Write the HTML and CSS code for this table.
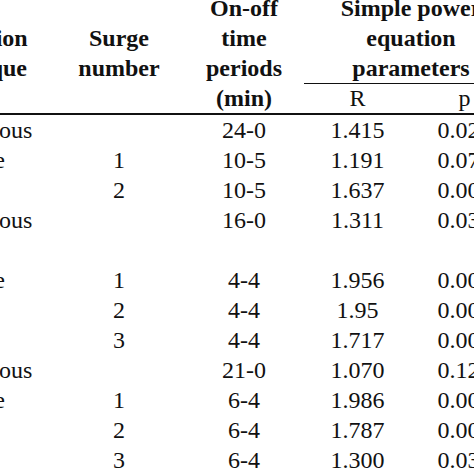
FILE: index.html
```html
<!DOCTYPE html>
<html>
<head>
<meta charset="utf-8">
<link rel="stylesheet" href="styles.css">
</head>
<body>
<div class="page">
<table class="tbl">
<colgroup><col class="c1"><col class="c2"><col class="c3"><col class="c4"><col class="c5"></colgroup>
<thead>
<tr>
<th rowspan="2">Irrigation<br>technique</th>
<th rowspan="2">Surge<br>number</th>
<th rowspan="2">On-off<br>time<br>periods<br>(min)</th>
<th colspan="2" class="grp">Simple power<br>equation<br>parameters</th>
</tr>
<tr><th class="sub">R</th><th class="sub">p</th></tr>
</thead>
<tbody>
<tr><td>Continuous</td><td></td><td>24-0</td><td>1.415</td><td>0.025</td></tr>
<tr><td>Surge</td><td>1</td><td>10-5</td><td>1.191</td><td>0.071</td></tr>
<tr><td></td><td>2</td><td>10-5</td><td>1.637</td><td>0.004</td></tr>
<tr><td>Continuous</td><td></td><td>16-0</td><td>1.311</td><td>0.032</td></tr>
<tr><td></td><td></td><td></td><td></td><td></td></tr>
<tr><td>Surge</td><td>1</td><td>4-4</td><td>1.956</td><td>0.002</td></tr>
<tr><td></td><td>2</td><td>4-4</td><td>1.95</td><td>0.003</td></tr>
<tr><td></td><td>3</td><td>4-4</td><td>1.717</td><td>0.006</td></tr>
<tr><td>Continuous</td><td></td><td>21-0</td><td>1.070</td><td>0.124</td></tr>
<tr><td>Surge</td><td>1</td><td>6-4</td><td>1.986</td><td>0.001</td></tr>
<tr><td></td><td>2</td><td>6-4</td><td>1.787</td><td>0.005</td></tr>
<tr><td></td><td>3</td><td>6-4</td><td>1.300</td><td>0.034</td></tr>
</tbody>
</table>
</div>
</body>
</html>
```
FILE: styles.css
```css
html, body {
  margin: 0;
  padding: 0;
  background: #fff;
  overflow: hidden;
}
.page {
  width: 474px;
  height: 474px;
  overflow: hidden;
  background: #fff;
}
.tbl {
  font-family: "Liberation Serif", "Times New Roman", serif;
  font-size: 24px;
  line-height: 30px;
  color: #111;
  table-layout: fixed;
  width: 618px;
  margin-left: -100px;
  margin-top: -7px;
  border-collapse: collapse;
  border-spacing: 0;
}
.c1 { width: 154px; }
.c2 { width: 130px; }
.c3 { width: 120px; }
.c4 { width: 107px; }
.c5 { width: 107px; }
.tbl th, .tbl td {
  padding: 0;
  text-align: center;
  vertical-align: middle;
  white-space: nowrap;
}
.tbl th { font-weight: bold; }
.tbl thead { border-bottom: 2px solid #111; }
.tbl th.grp {
  border-bottom: 1px solid #111;
  vertical-align: top;
}
.tbl th.sub {
  font-weight: normal;
  height: 29px;
  line-height: 29px;
}
.tbl td { height: 30px; }
```
